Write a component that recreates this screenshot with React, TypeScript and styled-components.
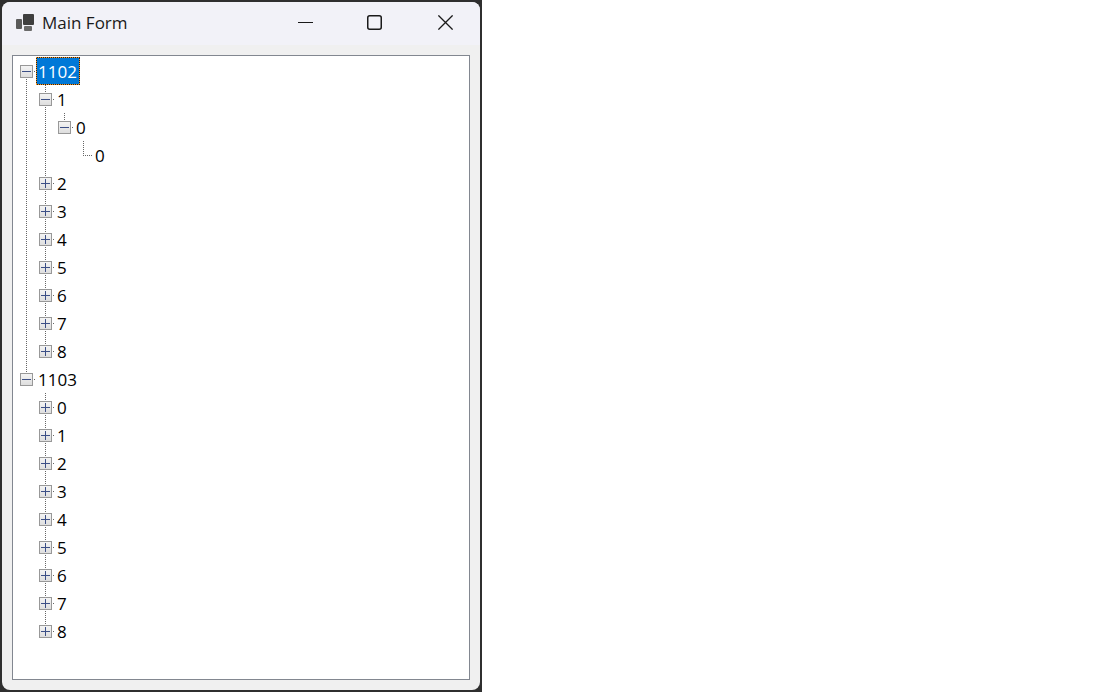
import React from 'react';
import styled, { createGlobalStyle, css } from 'styled-components';

type NodeState = 'open' | 'closed' | 'leaf';

interface TreeNode {
  label: string;
  depth: number;
  state: NodeState;
  hasPrev?: boolean; // an earlier sibling's line comes down into this row
  hasNext?: boolean; // a later sibling exists, so the line runs on below this row
  guides?: number[]; // ancestor levels whose line passes through this row
  selected?: boolean;
}

const closedRange = (from: number, to: number, last: boolean): TreeNode[] =>
  Array.from({ length: to - from + 1 }, (_, i) => ({
    label: String(from + i),
    depth: 1,
    state: 'closed' as NodeState,
    hasPrev: true,
    hasNext: !last || from + i < to,
    guides: last ? [] : [0],
  }));

const nodes: TreeNode[] = [
  { label: '1102', depth: 0, state: 'open', hasNext: true, selected: true },
  { label: '1', depth: 1, state: 'open', hasPrev: true, hasNext: true, guides: [0] },
  { label: '0', depth: 2, state: 'open', hasPrev: true, guides: [0, 1] },
  { label: '0', depth: 3, state: 'leaf', hasPrev: true, guides: [0, 1] },
  ...closedRange(2, 7, false),
  { label: '8', depth: 1, state: 'closed', hasPrev: true, guides: [0] },
  { label: '1103', depth: 0, state: 'open', hasPrev: true },
  ...closedRange(0, 8, true),
];

const App: React.FC = () => {
  return (
    <>
      <GlobalStyle />
      <Frame>
        <Win>
          <TitleBar>
            <AppIcon viewBox="0 0 19 17">
              <rect x="7" y="0" width="11" height="11" rx="1" fill="#3f3f3f" />
              <rect x="0" y="5" width="6" height="10" rx="1" fill="#5a5a5a" />
              <rect x="8" y="12" width="8" height="5" rx="1" fill="#6a6a6a" />
            </AppIcon>
            <Title>Main Form</Title>
            <Caption>
              <CaptionButton aria-label="Minimize">
                <svg width="15" height="15" viewBox="0 0 15 15">
                  <path d="M0 7.5H15" stroke="#1a1a1a" strokeWidth="1.2" fill="none" />
                </svg>
              </CaptionButton>
              <CaptionButton aria-label="Maximize" $pull>
                <svg width="15" height="15" viewBox="0 0 15 15">
                  <rect x="0.75" y="0.75" width="13.5" height="13.5" rx="2" stroke="#1a1a1a" strokeWidth="1.5" fill="none" />
                </svg>
              </CaptionButton>
              <CaptionButton aria-label="Close">
                <svg width="15" height="15" viewBox="0 0 15 15">
                  <path d="M0.4 0.4L14.6 14.6M14.6 0.4L0.4 14.6" stroke="#1a1a1a" strokeWidth="1.3" fill="none" />
                </svg>
              </CaptionButton>
            </Caption>
          </TitleBar>
          <Body>
            <Tree>
              {nodes.map((node, i) => (
                <Row key={i}>
                  {Array.from({ length: node.depth }, (_, level) => (
                    <Cell key={level} $through={(node.guides ?? []).includes(level)} />
                  ))}
                  <Cell $up={node.hasPrev} $down={node.hasNext} $across>
                    {node.state !== 'leaf' && (
                      <Expander>
                        <Glyph $plus={node.state === 'closed'} />
                      </Expander>
                    )}
                  </Cell>
                  <Label $selected={node.selected}>{node.label}</Label>
                </Row>
              ))}
            </Tree>
          </Body>
        </Win>
      </Frame>
    </>
  );
};

export default App;

const GlobalStyle = createGlobalStyle`
  html, body {
    margin: 0;
    padding: 0;
    background: #fff;
  }
  body {
    font-family: "Open Sans", "Noto Sans", sans-serif;
    color: #000;
  }
`;

const Frame = styled.div`
  width: 482px;
  height: 692px;
  box-sizing: border-box;
  padding: 2px;
  background: #2f2f2f;
`;

const Win = styled.div`
  height: 100%;
  display: flex;
  flex-direction: column;
  border-radius: 8px;
  overflow: hidden;
  background: #f0f0f0;
`;

const TitleBar = styled.div`
  height: 43px;
  flex: none;
  display: flex;
  align-items: center;
  padding-left: 14px;
  background: #f2f2f8;
`;

const AppIcon = styled.svg`
  width: 19px;
  height: 17px;
  margin: -3px 7px 0 0;
  flex: none;
`;

const Title = styled.span`
  font-size: 17px;
  margin-top: -3px;
  color: #1a1a1a;
`;

const Caption = styled.div`
  margin-left: auto;
  display: flex;
`;

const CaptionButton = styled.button<{ $pull?: boolean }>`
  width: 70px;
  height: 43px;
  padding: ${(p) => (p.$pull ? '0 1px 0 0' : '0 0 0 1px')};
  border: none;
  background: transparent;
  display: flex;
  align-items: center;
  justify-content: center;
  svg {
    display: block;
    margin-top: -2px;
  }
`;

const Body = styled.div`
  flex: 1;
  padding: 10px;
  display: flex;
`;

const Tree = styled.div`
  width: 458px;
  height: 625px;
  box-sizing: border-box;
  padding: 1px 0 0 4px;
  border: 1px solid #828790;
  background: #fff;
`;

const Row = styled.div`
  display: flex;
  height: 28px;
`;

const Cell = styled.div<{ $through?: boolean; $up?: boolean; $down?: boolean; $across?: boolean }>`
  position: relative;
  width: 19px;
  flex: none;

  /* vertical dotted line */
  &::before {
    content: '';
    position: absolute;
    left: 9px;
    top: ${(p) => (p.$through || p.$up ? '0' : '14px')};
    bottom: ${(p) => (p.$through || p.$down ? '0' : '14px')};
    display: ${(p) => (p.$through || p.$up || p.$down ? 'block' : 'none')};
    width: 1px;
    background: repeating-linear-gradient(to bottom, #666 0 1px, transparent 1px 2px);
  }

  /* horizontal dotted stub */
  &::after {
    content: '';
    position: absolute;
    left: 9px;
    top: 14px;
    display: ${(p) => (p.$across ? 'block' : 'none')};
    width: 9px;
    height: 1px;
    background: repeating-linear-gradient(to right, #666 0 1px, transparent 1px 2px);
  }
`;

const Expander = styled.span`
  position: absolute;
  z-index: 1;
  left: 3px;
  top: 8px;
  width: 13px;
  height: 13px;
  box-sizing: border-box;
  border: 1px solid #989898;
  background: linear-gradient(to bottom, #f4f4f4, #dedede);
`;

const Glyph = styled.span<{ $plus?: boolean }>`
  position: absolute;
  inset: 0;

  &::before {
    content: '';
    position: absolute;
    left: 1px;
    right: 1px;
    top: 5px;
    height: 1px;
    background: #3c4f86;
  }

  &::after {
    content: '';
    position: absolute;
    display: ${(p) => (p.$plus ? 'block' : 'none')};
    top: 1px;
    bottom: 1px;
    left: 5px;
    width: 1px;
    background: #3c4f86;
  }
`;

// focus rectangle of the selected node: orange and black dots on each edge
const focusDots = css`
  background:
    repeating-linear-gradient(to right, #f7941d 0 1px, #222 1px 2px) top / 100% 1px no-repeat,
    repeating-linear-gradient(to right, #f7941d 0 1px, #222 1px 2px) bottom / 100% 1px no-repeat,
    repeating-linear-gradient(to bottom, #f7941d 0 1px, #222 1px 2px) left / 1px 100% no-repeat,
    repeating-linear-gradient(to bottom, #f7941d 0 1px, #222 1px 2px) right / 1px 100% no-repeat,
    #0078d7;
`;

const Label = styled.span<{ $selected?: boolean }>`
  height: 28px;
  box-sizing: border-box;
  padding: 0 3px 0 2px;
  font-size: 17px;
  line-height: 30px;
  color: ${(p) => (p.$selected ? '#fff' : '#000')};
  ${(p) => p.$selected && focusDots}
`;
